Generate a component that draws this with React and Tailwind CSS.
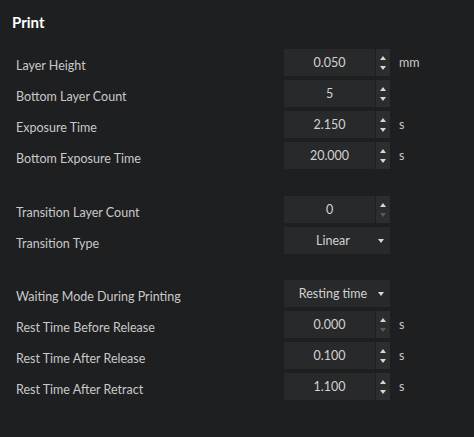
import React from "react";

const Spin = ({ downDisabled }) => (
  <div className="ml-px flex w-[14px] flex-col items-center justify-center gap-[6px] bg-[#2c2d2f]">
    <svg width="6" height="4" viewBox="0 0 6 4">
      <path d="M0 4 L3 0 L6 4 Z" fill="#d8d8d8" />
    </svg>
    <svg width="6" height="4" viewBox="0 0 6 4">
      <path d="M0 0 L3 4 L6 0 Z" fill={downDisabled ? "#5a5b5d" : "#d8d8d8"} />
    </svg>
  </div>
);

const Label = ({ children }) => (
  <div className="w-[284px] pl-4 pt-[8px] text-[12.5px] text-[#c9c9c9]">{children}</div>
);

const NumberRow = ({ label, value, unit, downDisabled }) => (
  <div className="flex h-[27px] items-center">
    <Label>{label}</Label>
    <div className="flex h-[27px] w-[106px]">
      <div className="flex flex-1 items-center justify-center bg-[#28292b] pt-[2px] text-[12.5px] text-[#d2d2d2]">
        {value}
      </div>
      <Spin downDisabled={downDisabled} />
    </div>
    <div className="pl-[9px] pt-[2px] text-[12.5px] text-[#c9c9c9]">{unit}</div>
  </div>
);

const SelectRow = ({ label, value }) => (
  <div className="flex h-[27px] items-center">
    <Label>{label}</Label>
    <div className="relative flex h-[27px] w-[106px] items-center justify-center bg-[#28292b] pr-[8px] pt-[2px] text-[12.5px] text-[#d2d2d2]">
      {value}
      <svg className="absolute right-[6px] top-[12px]" width="6" height="4" viewBox="0 0 6 4">
        <path d="M0 0 L3 4 L6 0 Z" fill="#d8d8d8" />
      </svg>
    </div>
  </div>
);

export default function App() {
  return (
    <div
      className="h-[437px] w-[474px] bg-[#1e1f21] pt-[12px]"
      style={{ fontFamily: 'Lato, "Open Sans", sans-serif' }}
    >
      <h1 className="pl-3 text-[15px] font-bold leading-[20px] text-white">Print</h1>
      <div className="mt-[17px] flex flex-col gap-[4px]">
        <NumberRow label="Layer Height" value="0.050" unit="mm" />
        <NumberRow label="Bottom Layer Count" value="5" />
        <NumberRow label="Exposure Time" value="2.150" unit="s" />
        <NumberRow label="Bottom Exposure Time" value="20.000" unit="s" />
      </div>
      <div className="mt-[27px] flex flex-col gap-[4px]">
        <NumberRow label="Transition Layer Count" value="0" downDisabled />
        <SelectRow label="Transition Type" value="Linear" />
      </div>
      <div className="mt-[26px] flex flex-col gap-[4px]">
        <SelectRow label="Waiting Mode During Printing" value="Resting time" />
        <NumberRow label="Rest Time Before Release" value="0.000" unit="s" downDisabled />
        <NumberRow label="Rest Time After Release" value="0.100" unit="s" />
        <NumberRow label="Rest Time After Retract" value="1.100" unit="s" />
      </div>
    </div>
  );
}
